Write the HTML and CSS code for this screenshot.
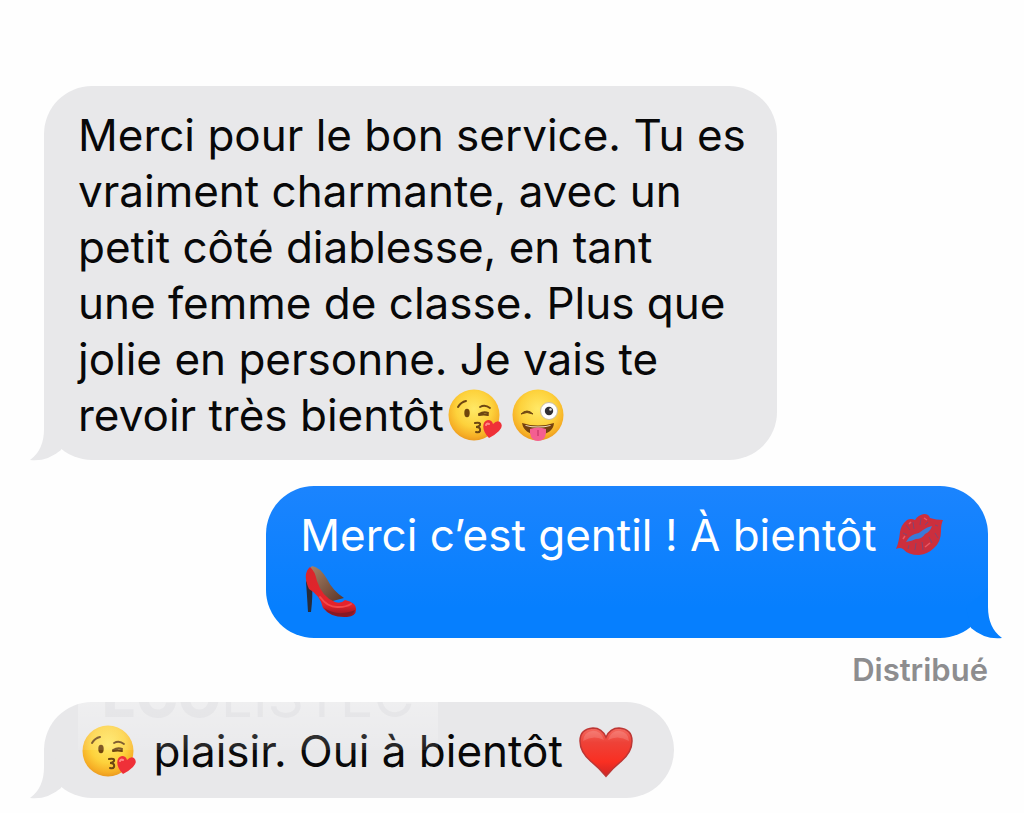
FILE: index.html
```html
<!DOCTYPE html>
<html lang="fr">
<head>
    <meta charset="UTF-8">
    <meta name="viewport" content="width=device-width, initial-scale=1.0">
    <title>Messages</title>

    <link rel="stylesheet" href="styles.css">

</head>

<body>

    <!-- shared drawings -->
    <svg class="defs" width="0" height="0" aria-hidden="true">
        <defs>
            <radialGradient id="face" cx="50%" cy="38%" r="64%">
                <stop offset="0" stop-color="#ffe967"/>
                <stop offset=".55" stop-color="#fdd23c"/>
                <stop offset=".85" stop-color="#f6ae25"/>
                <stop offset="1" stop-color="#e8951f"/>
            </radialGradient>
            <linearGradient id="red" x1="0" y1="0" x2="0" y2="1">
                <stop offset="0" stop-color="#f46a60"/>
                <stop offset=".3" stop-color="#ee4238"/>
                <stop offset=".7" stop-color="#f92f22"/>
                <stop offset="1" stop-color="#cf2525"/>
            </linearGradient>
            <linearGradient id="shoe" x1="0" y1="0" x2="0" y2="1">
                <stop offset="0" stop-color="#d9262b"/>
                <stop offset=".75" stop-color="#e5232b"/>
                <stop offset="1" stop-color="#8e1520"/>
            </linearGradient>
            <linearGradient id="insole" x1="0" y1="0" x2="1" y2="1">
                <stop offset="0" stop-color="#a78468"/>
                <stop offset="1" stop-color="#5b3326"/>
            </linearGradient>

            <symbol id="kiss" viewBox="0 0 54 54">
                <circle cx="26" cy="27" r="25.5" fill="url(#face)"/>
                <g fill="none" stroke="#6d4612" stroke-linecap="round">
                    <path d="M10 19q3-5 8-6" stroke-width="2"/>
                    <path d="M32 19q5-3 10 1" stroke-width="1.8"/>
                    <path d="M31 26q5-3 9-1M31 27q5-1 9 0" stroke-width="2"/>
                    <path d="M27 35q6-1 5 2q-1 2-4 2q5 0 4 4q-1 2-4 1" stroke-width="2"/>
                </g>
                <ellipse cx="19" cy="25" rx="2.7" ry="4.2" fill="#70450c"/>
                <path d="M41 50C33 42 34 33 40 32q4 0 5 4q4-4 7-2q4 4-1 9q-4 4-10 7z" fill="#ef3038"/>
                <path d="M38 37q1-2 3-1" stroke="#ff8784" stroke-width="2" fill="none" stroke-linecap="round"/>
            </symbol>

            <symbol id="wink" viewBox="0 0 54 54">
                <circle cx="27" cy="27" r="25.5" fill="url(#face)"/>
                <path d="M10 26q6-6 12 0q-6-3-12 0z" fill="#6d4612" stroke="#6d4612"/>
                <circle cx="38" cy="23" r="8.5" fill="#fff" stroke="#c9bda5"/>
                <circle cx="38" cy="23" r="4.2" fill="#303033"/>
                <circle cx="39.5" cy="21.5" r="1.3" fill="#ddd"/>
                <path d="M11 35q16 5 32 0q-1 11-16 12q-14-1-16-12z" fill="#75410f"/>
                <path d="M14 37q13 3 26 0l-1 1q-12 3-24 0z" fill="#fff2d3"/>
                <path d="M19 41q8-3 16 0v4q-1 8-8 8t-8-8z" fill="#f45f91"/>
                <path d="M27 42v6" stroke="#cf3d71" stroke-width="1.5"/>
            </symbol>

            <symbol id="lips" viewBox="0 0 54 54">
                <path d="M3 41Q6 34 7 24Q8 17 14 12q4-2 8 0q3-5 9-6q5 0 6 4q6 2 13 2q-2 4-2 11q0 11-7 17q-6 6-15 7q-11 0-16-6q-3-2-7 0z" fill="#cb2f3d"/>
                <path d="M13 34q3-6 9-8q5-1 8-4q4-3 9-4q-2 6-7 8q-3 5-9 5q-4 2-10 3z" fill="#3a7bd8"/>
                <g stroke="#7f4673" stroke-width="1" fill="none">
                    <path d="M13 17l4 5M20 14l1 7M28 10l-1 7M35 14l-3 3M10 25l4 2M42 25l3 5M36 29l3 6M29 34l1 8M23 35l-1 7M16 37l-1 4M42 17l3 1"/>
                </g>
                <path d="M31 10l3 2M32 39l5-4M16 16l2-2M10 31l2-3" stroke="#e95965" stroke-width="1.5"/>
            </symbol>

            <symbol id="heel" viewBox="0 0 54 54">
                <path d="M4 15l4 7q1 9-1 26H4Q3 31 2 18z" fill="#272c3b"/>
                <path d="M8 2q8 1 15 13q6 12 17 19l-15 4Q13 26 5 12q-1-7 3-10z" fill="url(#insole)"/>
                <path d="M6 3q5 4 7 14q5 16 18 21q6 2 10-2q12 3 11 10q0 6-9 7q-16 1-24-9q-3-13-14-19Q-2 10 6 3z" fill="url(#shoe)"/>
                <path d="M16 33q8 11 19 10q7 0 12-3" stroke="#f4494a" stroke-width="2" fill="none" stroke-linecap="round"/>
                <path d="M20 44q9 6 19 5q8-1 12-3q-1 5-10 6q-15 1-21-8z" fill="#861a26"/>
            </symbol>

            <symbol id="heart" viewBox="0 0 54 54">
                <g transform="translate(0 3) scale(1 .93)">
                    <path d="M27 53Q21 45 12 37Q1 27 1 15Q1 2 14 1q9 0 13 10Q31 1 40 1q13 1 13 14q0 12-11 22q-9 8-15 16z" fill="url(#red)" stroke="#bd3634" stroke-width="1.5"/>
                    <path d="M4 15q1-10 10-11q8 0 11 10Q15 8 4 15zM29 14Q32 4 40 4q9 1 10 11Q39 8 29 14z" fill="#fff" opacity=".15"/>
                </g>
            </symbol>

            <symbol id="tail" viewBox="0 0 42 52">
                <path d="M14 0V19Q14 40 0 50Q17 52 31 40L36 20z"/>
            </symbol>
        </defs>
    </svg>

    <main class="chat">

        <div class="message received long">
            <svg class="tail"><use href="#tail"/></svg>
            <p class="text">Merci pour le bon service. Tu es<br>
                vraiment charmante, avec un<br>
                petit côté diablesse, en tant<br>
                une femme de classe. Plus que<br>
                jolie en personne. Je vais te<br>
                revoir très bientôt<svg class="emoji" role="img" aria-label="😘"><use href="#kiss"/></svg><svg class="emoji" role="img" aria-label="😜"><use href="#wink"/></svg></p>
        </div>

        <div class="message sent">
            <svg class="tail"><use href="#tail"/></svg>
            <p class="text">Merci c’est gentil ! À bientôt <svg class="emoji" role="img" aria-label="💋"><use href="#lips"/></svg><br>
                <svg class="emoji" role="img" aria-label="👠"><use href="#heel"/></svg></p>
        </div>

        <p class="status">Distribué</p>

        <div class="message received">
            <svg class="tail"><use href="#tail"/></svg>
            <p class="text"><svg class="emoji" role="img" aria-label="😘"><use href="#kiss"/></svg> plaisir. Oui à bientôt <svg class="emoji" role="img" aria-label="❤️"><use href="#heart"/></svg></p>
            <div class="ghost" aria-hidden="true"><p class="ghost-text"><b>ECO</b>LISTEC</p></div>
        </div>

    </main>

</body>

</html>
```

FILE: styles.css
```css
* {
    box-sizing: border-box;
    margin: 0;
    padding: 0;
}

body {
    background: #fefefe;
    font-family: Inter, "Liberation Sans", sans-serif;
    color: #080809;
}

.defs {
    position: absolute;
}

.chat {
    display: flex;
    flex-direction: column;
    align-items: flex-start;
    padding: 86px 36px 15px 44px;
}

.message {
    position: relative;
    padding: 21px 36px 19px 34px;
    border-radius: 48px;
    font-size: 44px;
    line-height: 56px;
}

.received {
    background: #e8e8ea;
    fill: #e8e8ea;
}

.long {
    padding-right: 31px;
    padding-bottom: 17px;
}

.sent {
    align-self: flex-end;
    margin-top: 26px;
    color: #fff;
    background: linear-gradient(#1b84fe, #067ffe 80%);
    fill: #067ffe;
}

.text {
    position: relative;
    white-space: nowrap;
}

.tail {
    position: absolute;
    left: -14px;
    bottom: -2px;
    width: 42px;
    height: 52px;
}

.sent .tail {
    left: auto;
    right: -14px;
    transform: scaleX(-1);
}

.emoji {
    width: 54px;
    height: 54px;
    margin: 0 5px 0 4px;
    vertical-align: -11px;
}

.status {
    align-self: flex-end;
    margin: 14px 0;
    font-size: 31px;
    font-weight: 600;
    line-height: 36px;
    color: #8d8d8f;
}

/* faint label left over the top of the last bubble */
.ghost {
    position: absolute;
    top: 0;
    left: 34px;
    width: 360px;
    height: 48px;
    overflow: hidden;
    padding-left: 24px;
    background: linear-gradient(rgba(255, 255, 255, .3), rgba(255, 255, 255, .1));
}

.ghost-text {
    margin-top: -5px;
    font-size: 56px;
    line-height: 0;
    color: rgba(200, 200, 205, .2);
}

.ghost-text b {
    font-weight: 800;
}
```
